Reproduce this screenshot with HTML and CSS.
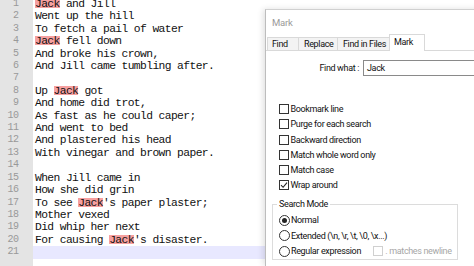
FILE: index.html
```html
<!DOCTYPE html>
<html>
<head>
<meta charset="utf-8">
<link rel="stylesheet" href="styles.css">
</head>
<body>
<div class="editor">
  <div class="gutter">
    <div class="ln">1</div><div class="ln">2</div><div class="ln">3</div><div class="ln">4</div><div class="ln">5</div><div class="ln">6</div><div class="ln">7</div><div class="ln">8</div><div class="ln">9</div><div class="ln">10</div><div class="ln">11</div><div class="ln">12</div><div class="ln">13</div><div class="ln">14</div><div class="ln">15</div><div class="ln">16</div><div class="ln">17</div><div class="ln">18</div><div class="ln">19</div><div class="ln">20</div><div class="ln">21</div>
  </div>
  <div class="code">
    <div class="line"><span class="mark">Jack</span> and Jill</div>
    <div class="line">Went up the hill</div>
    <div class="line">To fetch a pail of water</div>
    <div class="line"><span class="mark">Jack</span> fell down</div>
    <div class="line">And broke his crown,</div>
    <div class="line">And Jill came tumbling after.</div>
    <div class="line"></div>
    <div class="line">Up <span class="mark">Jack</span> got</div>
    <div class="line">And home did trot,</div>
    <div class="line">As fast as he could caper;</div>
    <div class="line">And went to bed</div>
    <div class="line">And plastered his head</div>
    <div class="line">With vinegar and brown paper.</div>
    <div class="line"></div>
    <div class="line">When Jill came in</div>
    <div class="line">How she did grin</div>
    <div class="line">To see <span class="mark">Jack</span>'s paper plaster;</div>
    <div class="line">Mother vexed</div>
    <div class="line">Did whip her next</div>
    <div class="line">For causing <span class="mark">Jack</span>'s disaster.</div>
    <div class="line current"></div>
  </div>
</div>

<div class="dialog">
  <div class="titlebar">Mark</div>
  <div class="tabs">
    <div class="tab tab-find">Find</div>
    <div class="tab tab-replace">Replace</div>
    <div class="tab tab-files">Find in Files</div>
    <div class="tab tab-mark active">Mark</div>
  </div>
  <div class="page">
    <div class="find-row">
      <div class="find-label">Find what :</div>
      <div class="input">Jack</div>
    </div>
    <div class="checks">
      <div class="check-row"><span class="box"></span><span>Bookmark line</span></div>
      <div class="check-row"><span class="box"></span><span>Purge for each search</span></div>
      <div class="check-row"><span class="box"></span><span>Backward direction</span></div>
      <div class="check-row"><span class="box"></span><span>Match whole word only</span></div>
      <div class="check-row"><span class="box"></span><span>Match case</span></div>
      <div class="check-row"><span class="box"><svg class="tick" viewBox="0 0 8 8" width="8" height="8"><path d="M1 4.2 L3.1 6.3 L7 1.6" fill="none" stroke="#222" stroke-width="1.1"/></svg></span><span>Wrap around</span></div>
    </div>
    <fieldset class="group">
      <legend class="legend">Search Mode</legend>
      <div class="radio-row"><span class="radio on"><span class="dot"></span></span><span>Normal</span></div>
      <div class="radio-row"><span class="radio"></span><span>Extended (\n, \r, \t, \0, \x...)</span></div>
      <div class="radio-row"><span class="radio"></span><span>Regular expression</span><span class="box dis"></span><span class="dis-text">. matches newline</span></div>
    </fieldset>
  </div>
</div>
</body>
</html>
```

FILE: styles.css
```css
* { box-sizing: border-box; }
html, body { margin: 0; padding: 0; }
body {
  width: 474px;
  height: 266px;
  overflow: hidden;
  background: #fff;
  position: relative;
}

/* editor */
.editor {
  display: flex;
  height: 266px;
  overflow: hidden;
}
.gutter {
  width: 33px;
  flex: none;
  background: #e4e4e4;
  font: 10px/12.43px "Liberation Mono", monospace;
  letter-spacing: -0.5px;
  color: #999;
  text-align: right;
  padding-right: 14.5px;
  margin-top: -2.2px;
  height: 272px;
}
.ln { height: 12.43px; }
.code {
  flex: 1;
  font: 11.3px/12.43px "Liberation Mono", monospace;
  letter-spacing: -0.6px;
  color: #111;
  margin-top: -2.2px;
}
.line { height: 12.43px; padding-left: 2px; white-space: pre; }
.current { background: #e8e8ff; }
.mark {
  background: linear-gradient(#f6a0a0, #f6a0a0) 0 45% / 100% 9px no-repeat;
}

/* dialog */
.dialog {
  position: absolute;
  left: 265px;
  top: 9px;
  width: 220px;
  height: 257px;
  overflow: hidden;
  background: #fff;
  border-left: 1px solid #bdbdbd;
  border-top: 1px solid #d0d0d0;
  box-shadow: -2px 0 6px rgba(0, 0, 0, 0.12);
  font-family: Roboto, "Noto Sans", sans-serif;
  font-size: 9px;
  letter-spacing: -0.35px;
  color: #111;
}
.titlebar {
  height: 24px;
  padding-left: 6px;
  display: flex;
  align-items: center;
  font-size: 9.5px;
  color: #9a9a9a;
  letter-spacing: -0.2px;
}
.tabs {
  display: flex;
  align-items: flex-end;
  height: 16px;
  padding-left: 2px;
}
.tab {
  height: 13px;
  line-height: 12px;
  background: #f3f3f3;
  border: 1px solid #d9d9d9;
  border-bottom: none;
  margin-left: -1px;
  padding-left: 4px;
}
.tab-find { width: 32px; }
.tab-replace { width: 40px; padding-left: 5px; }
.tab-files { width: 53px; padding-left: 5px; }
.tab-mark { width: 36px; }
.tab.active {
  position: relative;
  z-index: 1;
  height: 17px;
  margin-bottom: -1px;
  line-height: 15px;
  background: #fff;
}
.page {
  border-top: 1px solid #d9d9d9;
}
.find-row {
  display: flex;
  align-items: center;
  gap: 4px;
  margin-top: 9px;
  height: 16px;
}
.find-label { width: 93px; text-align: right; }
.input {
  flex: 1;
  height: 16px;
  border: 1px solid #8a8a8a;
  padding-left: 3px;
  line-height: 14px;
}
.checks { margin-top: 25.7px; padding-left: 13px; }
.check-row {
  display: flex;
  align-items: center;
  height: 15.2px;
}
.box {
  width: 10px;
  height: 10px;
  border: 1px solid #333;
  background: #fff;
  margin-right: 1.5px;
  flex: none;
  display: flex;
  align-items: center;
  justify-content: center;
}
.box.dis { border-color: #d0d0d0; margin-left: 12.3px; margin-right: 2px; }
.dis-text { color: #a6a6a6; }

.group {
  border: 1px solid #dcdcdc;
  margin: 6.6px 0 0 6px;
  padding: 2px 0 0 6px;
  width: 186px;
  min-width: 0;
}
.legend {
  padding: 0 2px;
  margin-left: -2px;
  line-height: 11px;
}
.radio-row {
  display: flex;
  align-items: center;
  height: 15.5px;
}
.radio {
  width: 11px;
  height: 11px;
  border: 1px solid #333;
  border-radius: 50%;
  margin-right: 1px;
  flex: none;
  display: flex;
  align-items: center;
  justify-content: center;
}
.dot {
  width: 5px;
  height: 5px;
  border-radius: 50%;
  background: #222;
}
```
